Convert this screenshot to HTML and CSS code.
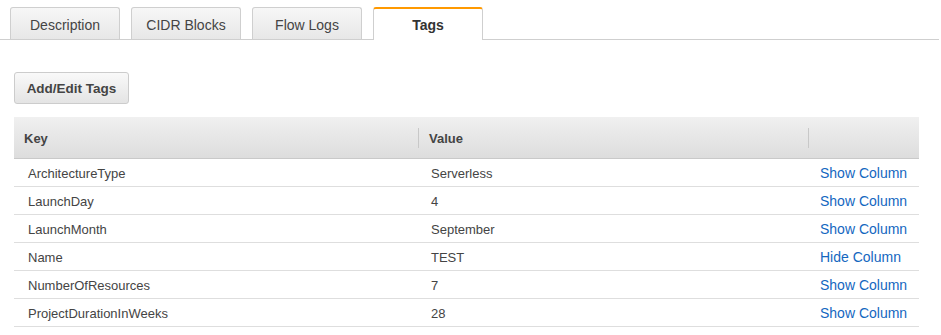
FILE: index.html
```html
<!DOCTYPE html>
<html>
<head>
<meta charset="utf-8">
<link rel="stylesheet" href="styles.css">
</head>
<body>
<div class="tabs">
  <div class="tab">Description</div>
  <div class="tab">CIDR Blocks</div>
  <div class="tab">Flow Logs</div>
  <div class="tab active">Tags</div>
</div>
<div class="content">
  <button class="btn">Add/Edit Tags</button>
  <div class="table">
    <div class="th first">Key</div>
    <div class="th"><span class="sep"></span>Value</div>
    <div class="th"><span class="sep"></span></div>

    <div class="td key">ArchitectureType</div><div class="td val">Serverless</div><div class="td act"><a>Show Column</a></div>
    <div class="td key">LaunchDay</div><div class="td val">4</div><div class="td act"><a>Show Column</a></div>
    <div class="td key">LaunchMonth</div><div class="td val">September</div><div class="td act"><a>Show Column</a></div>
    <div class="td key">Name</div><div class="td val">TEST</div><div class="td act"><a>Hide Column</a></div>
    <div class="td key">NumberOfResources</div><div class="td val">7</div><div class="td act"><a>Show Column</a></div>
    <div class="td key">ProjectDurationInWeeks</div><div class="td val">28</div><div class="td act"><a>Show Column</a></div>
  </div>
</div>
</body>
</html>
```
FILE: styles.css
```css
html, body {
  margin: 0;
  padding: 0;
  background: #fff;
}
body {
  font-family: "Liberation Sans", Arial, Helvetica, sans-serif;
  color: #444;
  width: 941px;
  height: 335px;
  overflow: hidden;
}
.tabs {
  display: flex;
  align-items: flex-end;
  gap: 11px;
  height: 39px;
  padding-left: 10px;
  margin-right: 2px;
  border-bottom: 1px solid #cfcfcf;
}
.tab {
  box-sizing: border-box;
  width: 110px;
  height: 32px;
  border: 1px solid #cfcfcf;
  border-bottom: none;
  border-radius: 3px 3px 0 0;
  background: linear-gradient(#f7f7f7, #e7e7e7);
  font-size: 14px;
  display: flex;
  align-items: center;
  justify-content: center;
  padding-top: 2px;
  color: #444;
}
.tab.active {
  height: 33px;
  margin-bottom: -1px;
  background: #fff;
  border-top: 2px solid #f90;
  font-weight: bold;
  color: #333;
  padding-top: 1px;
}
.content {
  padding: 32px 22px 0 14px;
}
.btn {
  box-sizing: border-box;
  display: block;
  width: 115px;
  height: 32px;
  padding: 1px 0 0;
  border: 1px solid #ccc;
  border-radius: 3px;
  background: linear-gradient(#f9f9f9, #e4e4e4);
  font-family: inherit;
  font-weight: bold;
  font-size: 13.5px;
  color: #444;
  cursor: pointer;
}
.table {
  margin-top: 13px;
  display: grid;
  grid-template-columns: 404px 390px 111px;
  font-size: 13px;
}
.th {
  box-sizing: border-box;
  height: 42px;
  padding-top: 1px;
  background: linear-gradient(#f0f0f0, #dddddd);
  border-bottom: 1px solid #c9c9c9;
  display: flex;
  align-items: center;
  font-weight: bold;
  color: #444;
  gap: 10px;
}
.th.first {
  padding-left: 10px;
}
.sep {
  width: 1px;
  height: 20px;
  background: #c8c8c8;
}
.td {
  box-sizing: border-box;
  height: 28px;
  padding-top: 1px;
  border-bottom: 1px solid #dedede;
  display: flex;
  align-items: center;
  color: #444;
}
.td.key {
  padding-left: 14px;
}
.td.val {
  padding-left: 13px;
}
.td.act {
  padding-left: 12px;
  font-size: 14px;
}
.td.act a {
  color: #1467bf;
  cursor: pointer;
}
```
